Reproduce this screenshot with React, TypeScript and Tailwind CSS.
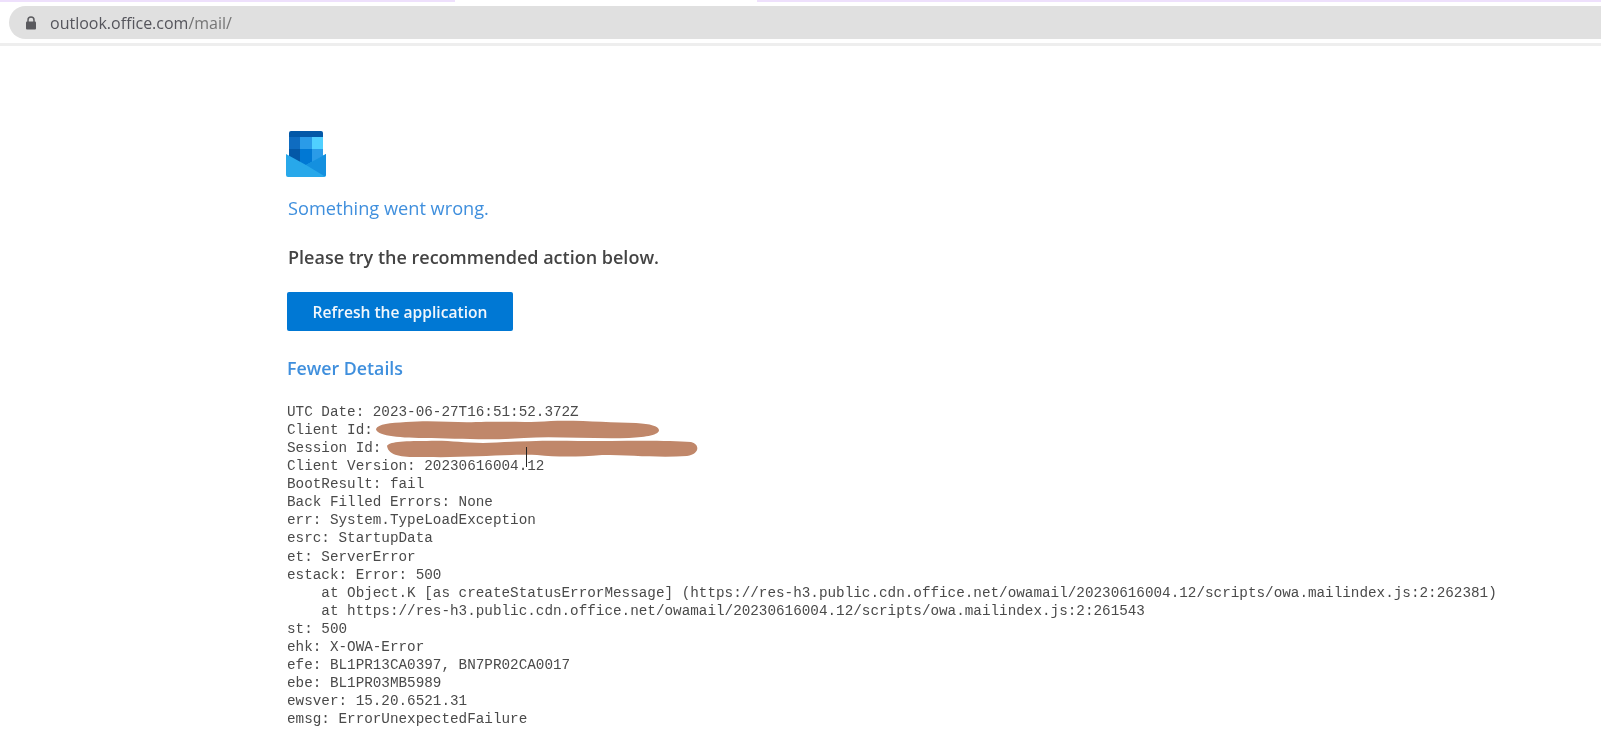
const detailLines = [
  'UTC Date: 2023-06-27T16:51:52.372Z',
  'Client Id:',
  'Session Id:',
  'Client Version: 20230616004.12',
  'BootResult: fail',
  'Back Filled Errors: None',
  'err: System.TypeLoadException',
  'esrc: StartupData',
  'et: ServerError',
  'estack: Error: 500',
  '    at Object.K [as createStatusErrorMessage] (https://res-h3.public.cdn.office.net/owamail/20230616004.12/scripts/owa.mailindex.js:2:262381)',
  '    at https://res-h3.public.cdn.office.net/owamail/20230616004.12/scripts/owa.mailindex.js:2:261543',
  'st: 500',
  'ehk: X-OWA-Error',
  'efe: BL1PR13CA0397, BN7PR02CA0017',
  'ebe: BL1PR03MB5989',
  'ewsver: 15.20.6521.31',
  'emsg: ErrorUnexpectedFailure',
];

function OutlookLogo() {
  return (
    <svg width="40" height="46" viewBox="0 0 40 46">
      <path d="M3 2a2 2 0 0 1 2-2h30a2 2 0 0 1 2 2v5H3z" fill="#0358a7" />
      <rect x="3" y="6" width="11" height="12" fill="#0f6cc0" />
      <rect x="14" y="6" width="12" height="12" fill="#2a9be8" />
      <rect x="26" y="6" width="11" height="12" fill="#50d0ff" />
      <rect x="3" y="18" width="11" height="18" fill="#0358a7" />
      <rect x="14" y="18" width="12" height="18" fill="#0078d4" />
      <rect x="26" y="18" width="11" height="18" fill="#2a9be8" />
      <path d="M0 23l20 11 20-11v21a2 2 0 0 1-2 2H2a2 2 0 0 1-2-2z" fill="#28a8ea" />
      <path d="M40 23v21l-1 1.500L20 34z" fill="#1490df" />
    </svg>
  );
}

function Redactions() {
  return (
    <svg width="325" height="40" viewBox="0 0 325 40" className="absolute left-[89px] top-[17px]">
      <path d="M0 9C2 4 14 3 30 2c30-2 50 1 70 0 30-1 50 1 75-1 30-1 60 2 85 2 15 1 22 3 23 7 0 5-12 7-30 8-40 1-75-2-105 0-40 3-70 0-100 0C20 18 0 15 0 9z" fill="#c0876a" />
      <path d="M11 26c2-4 14-5 40-5 22-1 34 2 56 2 25-1 55-3 95-2 45 0 90-1 113 1 9 2 9 12-4 14-30 2-55-1-85-1-25 2-45 2-65 0-30-1-70 3-110 2-20 0-38 1-40-11z" fill="#c0876a" />
    </svg>
  );
}

export default function App() {
  return (
    <div className="h-[735px] w-[1622px] overflow-hidden bg-white font-['Open_Sans',sans-serif] blur-[0.4px]">
      {/* barra do navegador */}
      <div className="flex h-[2px] w-[1601px] justify-between">
        <div className="w-[455px] bg-[#eee0fc]" />
        <div className="w-[844px] bg-[#eee0fc]" />
      </div>
      <div className="ml-[9px] mt-1 flex h-[33px] w-[1592px] items-center rounded-l-[17px] bg-[#e0e0e0]">
        <svg width="12" height="14" viewBox="0 0 12 14" className="ml-[16px]">
          <path d="M3 6V4a3 3 0 0 1 6 0v2" fill="none" stroke="#5a5a5e" strokeWidth="1.5" />
          <rect x="1" y="5.5" width="10" height="8" rx="1" fill="#5a5a5e" />
        </svg>
        <span className="ml-[13px] text-[16px] leading-none text-[#55555c]">
          outlook.office.com<span className="text-[#767676]">/mail/</span>
        </span>
      </div>
      <div className="mt-1 h-[3px] w-[1601px] bg-[#eeeeee]" />

      {/* conteudo do erro */}
      <div className="ml-[286px] pt-[85px]">
        <OutlookLogo />
        <h1 className="ml-[2px] mt-[17px] text-[18.2px] leading-[28px] text-[#3f8fdd]">Something went wrong.</h1>
        <p className="ml-[2px] mt-[21px] text-[18px] font-semibold leading-[28px] text-[#444444]">
          Please try the recommended action below.
        </p>
        <button className="ml-px mt-[21px] flex h-[39px] w-[226px] items-center justify-center rounded-[2px] bg-[#0078d4] pt-[2px] text-[15.6px] font-semibold text-[#f2f7fc]">
          Refresh the application
        </button>
        <p className="ml-[1px] mt-[24px] text-[17.8px] font-semibold leading-[26px] text-[#3f8fdd]">Fewer Details</p>
        <div className="relative ml-[1px] mt-[22px]">
          <pre className="font-['Liberation_Mono',monospace] text-[14.3px] leading-[18.06px] text-[#4a4a4a]">
            {detailLines.join('\n')}
          </pre>
          <Redactions />
          <div className="absolute left-[239px] top-[44px] h-[20px] w-px bg-[#222222]" />
        </div>
      </div>
    </div>
  );
}
